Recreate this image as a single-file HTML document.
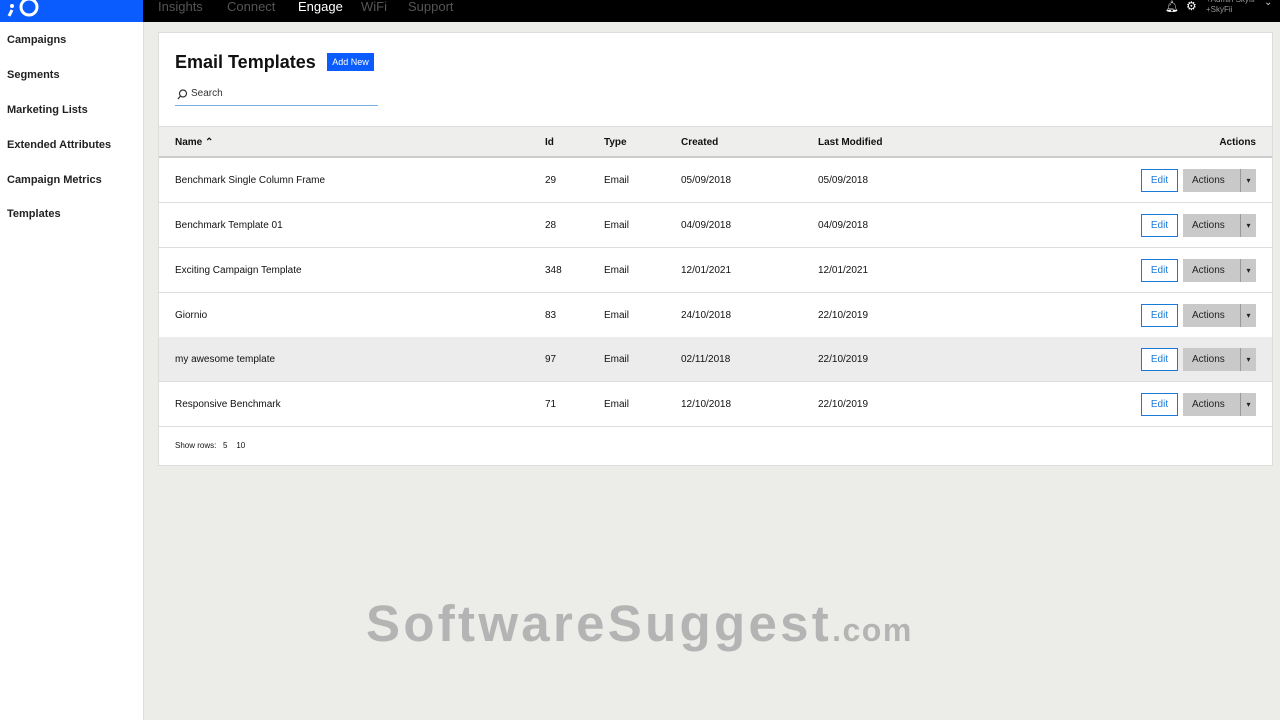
<!DOCTYPE html>
<html><head><style>
*{box-sizing:border-box;margin:0;padding:0}
body{width:1280px;height:720px;overflow:hidden;background:#ecece9;font-family:"Liberation Sans",sans-serif;position:relative;color:#111}
.top{position:absolute;left:0;top:0;width:1280px;height:22px;background:#000}
.logo{position:absolute;left:0;top:0;width:143px;height:22px;background:#0a5cff}
.nav{position:absolute;top:0;font-size:13px;color:#555;line-height:14px}
.side{position:absolute;left:0;top:22px;width:144px;height:698px;background:#fff;border-right:1px solid #ddd}
.side div{position:absolute;left:7px;font-size:11px;font-weight:bold;color:#222}
.card{position:absolute;left:158px;top:32px;width:1115px;height:434px;background:#fff;border:1px solid #ddd}
h1{position:absolute;left:16px;top:19px;font-size:18px;font-weight:bold;color:#111}
.add{position:absolute;left:168px;top:20px;width:47px;height:18px;background:#0a5cff;color:#fff;font-size:9px;text-align:center;line-height:18px}
.search{position:absolute;left:16px;top:52px;width:203px;height:21px;border-bottom:1px solid #7aaee0;font-size:10px;color:#333;padding-left:16px;line-height:18px}
.thead{position:absolute;left:0;top:93px;width:1113px;height:32px;background:#eeeeec;border-top:1px solid #ddd;border-bottom:2px solid #ccc;font-size:10px;font-weight:bold}
.row{position:absolute;left:0;width:1113px;height:45px;border-bottom:1px solid #ddd;font-size:10px}
.c{position:absolute;top:17px}
.thead .c{top:10px}
.edit{position:absolute;right:94px;top:11px;width:37px;height:23px;border:1px solid #1a7ad6;color:#1a7ad6;font-size:10px;text-align:center;line-height:21px;background:#fff}
.act{position:absolute;right:16px;top:11px;width:73px;height:23px;background:#c9c9c9;font-size:10px;line-height:23px;padding-left:9px;color:#222}
.act:after{content:"▾";position:absolute;right:0;top:0;width:15px;border-left:1px solid #999;text-align:center;font-size:8px}
.wm{position:absolute;left:366px;top:594px;font-size:51px;font-weight:bold;color:#b4b4b4;letter-spacing:3.3px;white-space:nowrap}
</style></head><body>
<div class="top"></div>
<div class="logo"><svg width="40" height="22" style="position:absolute;left:6px;top:0"><circle cx="23" cy="7" r="8" fill="none" stroke="#fff" stroke-width="3"/><circle cx="6" cy="6" r="2" fill="#fff"/><path d="M6 10 L3 16" stroke="#fff" stroke-width="3"/></svg></div>
<div class="nav" style="left:158px">Insights</div>
<div class="nav" style="left:227px">Connect</div>
<div class="nav" style="left:298px;color:#fff">Engage</div>
<div class="nav" style="left:361px">WiFi</div>
<div class="nav" style="left:408px">Support</div>
<div style="position:absolute;left:1165px;top:0;color:#fff;font-size:11px">🔔︎</div>
<div style="position:absolute;left:1186px;top:-1px;color:#fff;font-size:12px">⚙</div>
<div style="position:absolute;left:1206px;top:-5px;color:#999;font-size:8px;line-height:10px">+Admin Skyfii<br>+SkyFii</div>
<div style="position:absolute;left:1264px;top:-3px;color:#ccc;font-size:10px">⌄</div>
<div class="side">
<div style="top:12px">Campaigns</div><div style="top:47px">Segments</div><div style="top:82px">Marketing Lists</div><div style="top:117px">Extended Attributes</div><div style="top:152px">Campaign Metrics</div><div style="top:186px">Templates</div>
</div>
<div class="card">
<h1>Email Templates</h1><div class="add">Add New</div>
<div class="search"><svg width="11" height="11" style="position:absolute;left:2px;top:4px"><circle cx="6" cy="4.5" r="3.5" fill="none" stroke="#333" stroke-width="1.2"/><path d="M3.5 7 L1 10" stroke="#333" stroke-width="1.2"/></svg>Search</div>
<div class="thead"><span class="c" style="left:16px">Name ⌃</span><span class="c" style="left:386px">Id</span><span class="c" style="left:445px">Type</span><span class="c" style="left:522px">Created</span><span class="c" style="left:659px">Last Modified</span><span class="c" style="right:16px">Actions</span></div>
<div class="row" style="top:125px"><span class="c" style="left:16px">Benchmark Single Column Frame</span><span class="c" style="left:386px">29</span><span class="c" style="left:445px">Email</span><span class="c" style="left:522px">05/09/2018</span><span class="c" style="left:659px">05/09/2018</span><div class="edit">Edit</div><div class="act">Actions</div></div>
<div class="row" style="top:170px"><span class="c" style="left:16px">Benchmark Template 01</span><span class="c" style="left:386px">28</span><span class="c" style="left:445px">Email</span><span class="c" style="left:522px">04/09/2018</span><span class="c" style="left:659px">04/09/2018</span><div class="edit">Edit</div><div class="act">Actions</div></div>
<div class="row" style="top:215px"><span class="c" style="left:16px">Exciting Campaign Template</span><span class="c" style="left:386px">348</span><span class="c" style="left:445px">Email</span><span class="c" style="left:522px">12/01/2021</span><span class="c" style="left:659px">12/01/2021</span><div class="edit">Edit</div><div class="act">Actions</div></div>
<div class="row" style="top:260px"><span class="c" style="left:16px">Giornio</span><span class="c" style="left:386px">83</span><span class="c" style="left:445px">Email</span><span class="c" style="left:522px">24/10/2018</span><span class="c" style="left:659px">22/10/2019</span><div class="edit">Edit</div><div class="act">Actions</div></div>
<div class="row" style="top:304px;background:#ececec"><span class="c" style="left:16px">my awesome template</span><span class="c" style="left:386px">97</span><span class="c" style="left:445px">Email</span><span class="c" style="left:522px">02/11/2018</span><span class="c" style="left:659px">22/10/2019</span><div class="edit">Edit</div><div class="act">Actions</div></div>
<div class="row" style="top:349px"><span class="c" style="left:16px">Responsive Benchmark</span><span class="c" style="left:386px">71</span><span class="c" style="left:445px">Email</span><span class="c" style="left:522px">12/10/2018</span><span class="c" style="left:659px">22/10/2019</span><div class="edit">Edit</div><div class="act">Actions</div></div>
<div style="position:absolute;left:16px;top:408px;font-size:8px">Show rows:&nbsp;&nbsp;&nbsp;5&nbsp;&nbsp;&nbsp;&nbsp;10</div>
</div>
<div class="wm">SoftwareSuggest<span style="font-size:32px;letter-spacing:1.5px">.com</span></div>
</body></html>
